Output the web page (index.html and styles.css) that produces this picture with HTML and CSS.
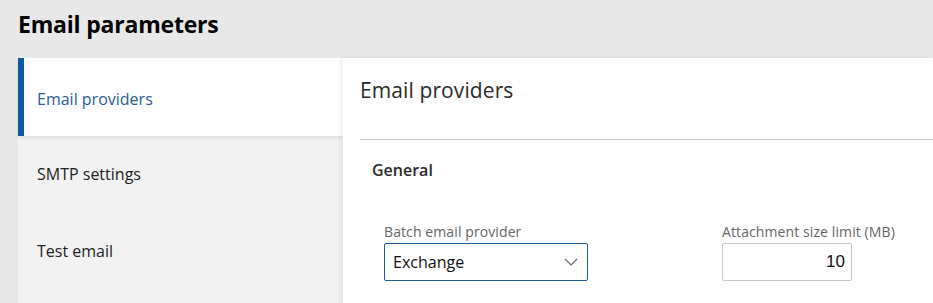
FILE: index.html
```html
<!DOCTYPE html>
<html lang="en">
<head>
  <meta charset="UTF-8" />
  <title>Email parameters</title>
  <link rel="stylesheet" href="styles.css">
</head>
<body>
  <h1 class="titulo">Email parameters</h1>
  <div class="marco">
    <nav class="menu">
      <div class="menu-item activo">Email providers</div>
      <div class="menu-item">SMTP settings</div>
      <div class="menu-item">Test email</div>
    </nav>
    <section class="panel">
      <h2 class="panel-titulo">Email providers</h2>
      <div class="grupo">
        <h3 class="grupo-titulo">General</h3>
        <div class="campos">
          <div class="campo">
            <label class="etiqueta">Batch email provider</label>
            <div class="combo">
              <span>Exchange</span>
              <svg class="flecha" width="14" height="8" viewBox="0 0 14 8"><path d="M1 1 L7 7 L13 1" fill="none" stroke="#666" stroke-width="1.1"/></svg>
            </div>
          </div>
          <div class="campo">
            <label class="etiqueta">Attachment size limit (MB)</label>
            <div class="numero">10</div>
          </div>
        </div>
      </div>
    </section>
  </div>
</body>
</html>
```

FILE: styles.css
```css
body {
  margin: 0;
  background: #e8e8e8;
  font-family: "Open Sans", "Noto Sans", sans-serif;
  color: #333;
  overflow: hidden;
}
.titulo {
  margin: 0;
  padding: 8px 0 0 18px;
  height: 58px;
  box-sizing: border-box;
  font-size: 23px;
  font-weight: 700;
  color: #000;
  letter-spacing: -0.2px;
}
.marco {
  display: flex;
  margin-left: 18px;
}
.menu {
  width: 325px;
  flex: none;
  background: #f2f2f2;
  height: 260px;
}
.menu-item {
  height: 77px;
  display: flex;
  align-items: center;
  padding-left: 19px;
  font-size: 16px;
  color: #222;
}
.menu-item.activo {
  background: #fff;
  color: #2b5b94;
  border-left: 6px solid #0f5aa3;
  padding-left: 13px;
  height: 74px;
  padding-top: 4px;
  margin-bottom: -1px;
  box-shadow: 0 2px 3px rgba(0, 0, 0, 0.08);
}
.panel {
  flex: 1;
  background: #fff;
  height: 260px;
  box-shadow: -3px 0 4px rgba(0, 0, 0, 0.06);
  padding: 0 0 0 17px;
}
.panel-titulo {
  margin: 0;
  height: 82px;
  display: flex;
  align-items: center;
  font-size: 21px;
  font-weight: 400;
  color: #2a2a2a;
  border-bottom: 1px solid #c8c8c8;
  box-sizing: border-box;
  padding-bottom: 17px;
  letter-spacing: 0.1px;
}
.grupo {
  padding-left: 12px;
}
.grupo-titulo {
  margin: 0;
  height: 62px;
  display: flex;
  align-items: center;
  font-size: 16px;
  font-weight: 600;
  color: #2a2a2a;
  padding-bottom: 2px;
  box-sizing: border-box;
}
.campos {
  display: flex;
  gap: 134px;
  padding-left: 12px;
  padding-top: 20px;
}
.etiqueta {
  display: block;
  font-size: 14px;
  color: #666;
  line-height: 20px;
  height: 21px;
  letter-spacing: 0.1px;
}
.combo {
  width: 185px;
  height: 36px;
  border: 1px solid #1f5b97;
  border-radius: 2px;
  display: flex;
  align-items: center;
  justify-content: space-between;
  padding: 0 9px 0 8px;
  font-size: 16px;
  color: #111;
}
.numero {
  width: 114px;
  height: 36px;
  border: 1px solid #c8c8c8;
  border-radius: 2px;
  display: flex;
  align-items: center;
  justify-content: flex-end;
  padding-right: 6px;
  padding-left: 8px;
  font-family: "Liberation Sans", sans-serif;
  font-size: 17px;
  color: #111;
}
```
